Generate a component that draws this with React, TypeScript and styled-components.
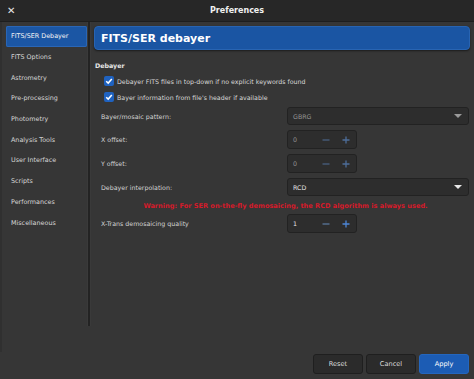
import React from 'react';
import styled, { createGlobalStyle } from 'styled-components';

const GlobalStyle = createGlobalStyle`
  html, body {
    margin: 0;
    padding: 0;
    background: #353535;
  }
  * {
    box-sizing: border-box;
  }
`;

const Window = styled.div`
  width: 474px;
  height: 379px;
  display: flex;
  flex-direction: column;
  background: #363636;
  color: #dcdcdc;
  font-family: 'DejaVu Sans', 'Noto Sans', sans-serif;
  font-size: 6.3px;
  overflow: hidden;
`;

const TitleBar = styled.div`
  height: 22px;
  flex: none;
  display: grid;
  grid-template-columns: 40px 1fr 40px;
  align-items: center;
  background: #272727;
  border-bottom: 1px solid #1e1e1e;
`;

const CloseButton = styled.span`
  padding-left: 7px;
  font-size: 10px;
  font-weight: bold;
  color: #e8e8e8;
`;

const Title = styled.span`
  text-align: center;
  font-weight: bold;
  font-size: 8px;
  color: #f0f0f0;
`;

const Body = styled.div`
  flex: 1;
  display: flex;
  min-height: 0;
`;

const Sidebar = styled.div`
  width: 87px;
  flex: none;
  display: flex;
  flex-direction: column;
  padding: 4px 0 0 4px;
  border-left: 2px solid #303030;
`;

const NavItem = styled.div<{ $active?: boolean }>`
  height: 20.7px;
  display: flex;
  align-items: center;
  padding-left: 5px;
  font-size: 6.4px;
  color: ${p => (p.$active ? '#f4f4f4' : '#d6d6d6')};
  background: ${p => (p.$active ? '#1b56a4' : 'transparent')};
  border-radius: ${p => (p.$active ? '2px' : '0')};
  box-shadow: ${p => (p.$active ? 'inset 0 0 0 1px #2a66b6' : 'none')};
`;

const Divider = styled.div`
  width: 4px;
  flex: none;
  margin-bottom: 26px;
  border-left: 1px solid #3a3a3a;
  border-right: 1px solid #3a3a3a;
  background: #232323;
`;

const Content = styled.div`
  flex: 1;
  display: flex;
  flex-direction: column;
  padding: 4px 4px 0 3px;
`;

const Banner = styled.div`
  height: 24px;
  flex: none;
  display: flex;
  align-items: center;
  padding-left: 6px;
  background: #1a55a3;
  border: 1px solid #2864b2;
  border-radius: 4px;
  box-shadow: 0 1px 2px rgba(0, 0, 0, 0.5);
  color: #ffffff;
  font-size: 11px;
  font-weight: bold;
`;

const SectionTitle = styled.div`
  margin-top: 12px;
  height: 8px;
  line-height: 8px;
  padding-left: 1px;
  font-weight: bold;
  color: #e6e6e6;
`;

const CheckList = styled.div`
  margin-top: 3px;
  display: flex;
  flex-direction: column;
`;

const CheckRow = styled.label`
  display: flex;
  align-items: center;
  gap: 3px;
  height: 16px;
  padding-left: 10px;
  color: #d8d8d8;
`;

const CheckBox = styled.span`
  width: 10px;
  height: 10px;
  border-radius: 2px;
  background: #1f62c0;
  display: flex;
  align-items: center;
  justify-content: center;
`;

const Form = styled.div`
  margin-top: 2px;
  display: grid;
  grid-template-columns: 193px 182px;
  row-gap: 5px;
  align-items: center;
`;

const Label = styled.span`
  padding-left: 7px;
  color: #d4d4d4;
`;

const Warning = styled.div`
  grid-column: 1 / 3;
  margin: 2px 0 -1px;
  text-align: center;
  padding-left: 8px;
  color: #d51a2a;
  font-size: 6.6px;
  font-weight: bold;
  height: 7px;
  line-height: 7px;
`;

const Combo = styled.div<{ $disabled?: boolean }>`
  height: 18px;
  display: flex;
  align-items: center;
  justify-content: space-between;
  padding: 0 6px 0 5px;
  background: #2d2d2d;
  border: 1px solid #222222;
  border-radius: 3px;
  color: ${p => (p.$disabled ? '#939393' : '#e4e4e4')};
`;

const Arrow = styled.span<{ $disabled?: boolean }>`
  width: 0;
  height: 0;
  border-left: 4px solid transparent;
  border-right: 4px solid transparent;
  border-top: 4px solid ${p => (p.$disabled ? '#9a9a9a' : '#e8e8e8')};
`;

const Spin = styled.div<{ $disabled?: boolean }>`
  width: 70px;
  height: 19px;
  display: grid;
  grid-template-columns: 1fr 20px 20px;
  align-items: center;
  padding-left: 5px;
  background: #2d2d2d;
  border: 1px solid #222222;
  border-radius: 3px;
  color: ${p => (p.$disabled ? '#939393' : '#e4e4e4')};
`;

const SpinButton = styled.span`
  display: flex;
  align-items: center;
  justify-content: center;
`;

const Footer = styled.div`
  height: 27px;
  flex: none;
  display: flex;
  justify-content: flex-end;
  gap: 3px;
  padding: 2px 5px 0 0;
`;

const Button = styled.div<{ $primary?: boolean }>`
  width: 50px;
  height: 20px;
  display: flex;
  align-items: center;
  justify-content: center;
  border-radius: 3px;
  font-size: 6.6px;
  background: ${p => (p.$primary ? '#1c5cb4' : '#2b2b2b')};
  border: 1px solid ${p => (p.$primary ? '#2466be' : '#1f1f1f')};
  color: ${p => (p.$primary ? '#ffffff' : '#dcdcdc')};
`;

const Check = () => (
  <CheckBox>
    <svg width="8" height="8" viewBox="0 0 8 8">
      <path d="M1.2 4.2 L3.2 6.1 L6.8 1.9" fill="none" stroke="#fff" strokeWidth="1.5" />
    </svg>
  </CheckBox>
);

const Minus = ({ color }: { color: string }) => (
  <svg width="8" height="8" viewBox="0 0 8 8">
    <path d="M0.5 4 H7.5" stroke={color} strokeWidth="1.3" />
  </svg>
);

const Plus = ({ color }: { color: string }) => (
  <svg width="8" height="8" viewBox="0 0 8 8">
    <path d="M0.5 4 H7.5 M4 0.5 V7.5" stroke={color} strokeWidth="1.3" />
  </svg>
);

const SpinBox = ({ value, disabled }: { value: string; disabled?: boolean }) => (
  <Spin $disabled={disabled}>
    <span>{value}</span>
    <SpinButton>
      <Minus color={disabled ? '#4a6080' : '#5a789c'} />
    </SpinButton>
    <SpinButton>
      <Plus color={disabled ? '#4d6d99' : '#4d86d6'} />
    </SpinButton>
  </Spin>
);

const navItems = [
  'FITS/SER Debayer',
  'FITS Options',
  'Astrometry',
  'Pre-processing',
  'Photometry',
  'Analysis Tools',
  'User Interface',
  'Scripts',
  'Performances',
  'Miscellaneous',
];

export default function App() {
  return (
    <>
      <GlobalStyle />
      <Window>
        <TitleBar>
          <CloseButton>✕</CloseButton>
          <Title>Preferences</Title>
          <span />
        </TitleBar>
        <Body>
          <Sidebar>
            {navItems.map((item, i) => (
              <NavItem key={item} $active={i === 0}>
                {item}
              </NavItem>
            ))}
          </Sidebar>
          <Divider />
          <Content>
            <Banner>FITS/SER debayer</Banner>
            <SectionTitle>Debayer</SectionTitle>
            <CheckList>
              <CheckRow>
                <Check />
                Debayer FITS files in top-down if no explicit keywords found
              </CheckRow>
              <CheckRow>
                <Check />
                Bayer information from file's header if available
              </CheckRow>
            </CheckList>
            <Form>
              <Label>Bayer/mosaic pattern:</Label>
              <Combo $disabled>
                <span>GBRG</span>
                <Arrow $disabled />
              </Combo>
              <Label>X offset:</Label>
              <SpinBox value="0" disabled />
              <Label>Y offset:</Label>
              <SpinBox value="0" disabled />
              <Label>Debayer interpolation:</Label>
              <Combo>
                <span>RCD</span>
                <Arrow />
              </Combo>
              <Warning>
                Warning: For SER on-the-fly demosaicing, the RCD algorithm is always used.
              </Warning>
              <Label>X-Trans demosaicing quality</Label>
              <SpinBox value="1" />
            </Form>
          </Content>
        </Body>
        <Footer>
          <Button>Reset</Button>
          <Button>Cancel</Button>
          <Button $primary>Apply</Button>
        </Footer>
      </Window>
    </>
  );
}
